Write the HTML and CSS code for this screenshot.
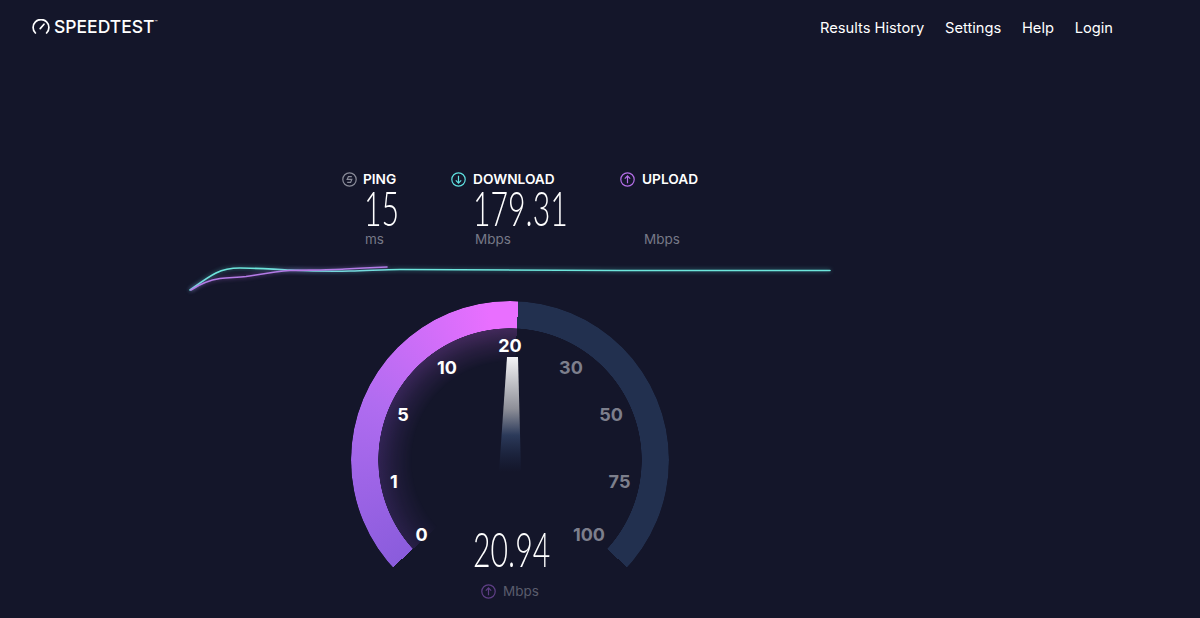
FILE: index.html
```html
<!DOCTYPE html>
<html lang="en">
<head>
<meta charset="utf-8">
<title>Speedtest</title>
<link rel="stylesheet" href="styles.css">
</head>
<body>
<div class="page">
  <header class="topbar">
    <div class="logo">
      <svg class="logo-icon" width="18" height="15" viewBox="0 0 18 15"><path d="M3.400 14A7.900 7.900 0 1 1 14.600 14" fill="none" stroke="#fff" stroke-width="1.700" stroke-linecap="round"/><path d="M8.200 9.600L12 5.200" fill="none" stroke="#fff" stroke-width="1.700" stroke-linecap="round"/></svg>
      <span class="logo-text">SPEEDTEST</span><span class="logo-tm">™</span>
    </div>
    <nav class="nav">
      <a>Results History</a>
      <a>Settings</a>
      <a>Help</a>
      <a>Login</a>
    </nav>
  </header>

  <section class="stats">
    <div class="stat stat-ping">
      <div class="stat-head">
        <svg class="stat-icon" width="15" height="15" viewBox="0 0 15 15"><circle cx="7.500" cy="7.500" r="6.700" fill="none" stroke="#8a8c99" stroke-width="1.200"/><path d="M9.800 4.600H6.400L5.200 7.400H9.800L8.600 10.400H5.200" fill="none" stroke="#8a8c99" stroke-width="1.200"/></svg>
        <span>PING</span>
      </div>
      <div class="stat-value"><span class="thin">15</span></div>
      <div class="stat-unit">ms</div>
    </div>
    <div class="stat stat-down">
      <div class="stat-head">
        <svg class="stat-icon" width="15" height="15" viewBox="0 0 15 15"><circle cx="7.500" cy="7.500" r="6.700" fill="none" stroke="#5fe0e0" stroke-width="1.200"/><path d="M7.500 3.800V11M4.800 8.400l2.700 2.700 2.700-2.700" fill="none" stroke="#5fe0e0" stroke-width="1.200"/></svg>
        <span>DOWNLOAD</span>
      </div>
      <div class="stat-value"><span class="thin">179.31</span></div>
      <div class="stat-unit">Mbps</div>
    </div>
    <div class="stat stat-up">
      <div class="stat-head">
        <svg class="stat-icon" width="15" height="15" viewBox="0 0 15 15"><circle cx="7.500" cy="7.500" r="6.700" fill="none" stroke="#b56fe8" stroke-width="1.200"/><path d="M7.500 11.200V4M4.800 6.600l2.700-2.700 2.700 2.700" fill="none" stroke="#b56fe8" stroke-width="1.200"/></svg>
        <span>UPLOAD</span>
      </div>
      <div class="stat-value"></div>
      <div class="stat-unit">Mbps</div>
    </div>
  </section>

  <svg class="graph" width="650" height="36" viewBox="185 260 650 36">
    <path class="line-teal" d="M190 290C200 283 208 277 216 273C224 269 230 268 240 268C256 268 272 269 290 270C310 271 330 271.500 350 271C370 270.500 385 269.500 400 269.500C500 269.500 560 270 620 270.500C700 270 770 270 830 270.500"/>
    <path class="line-purple" d="M191 290C200 284 210 280 220 278.500C230 277.500 238 277.500 246 276.500C262 274 276 271.500 290 270.500C310 270 330 270 345 269C360 268 372 267.500 387 267"/>
  </svg>

  <div class="gauge">
    <div class="gauge-glow"></div>
    <div class="gauge-ring"></div>
    <svg class="gauge-overlay" width="318" height="318" viewBox="351 301 318 318">
      <defs>
        <linearGradient id="needle" x1="0" y1="0" x2="0" y2="1">
          <stop offset="0" stop-color="#f4f4f6"/>
          <stop offset="0.45" stop-color="#8e8f98"/>
          <stop offset="0.68" stop-color="#2c3a5a"/>
          <stop offset="1" stop-color="#1d2a4a" stop-opacity="0"/>
        </linearGradient>
      </defs>
      <polygon points="507,357 518,357 521,472 499,472" fill="url(#needle)"/>
      <g class="ticks-on">
        <text x="421.500" y="541">0</text>
        <text x="394" y="488">1</text>
        <text x="403" y="421">5</text>
        <text x="447" y="374">10</text>
        <text x="510" y="352">20</text>
      </g>
      <g class="ticks-off">
        <text x="571" y="374">30</text>
        <text x="611" y="421">50</text>
        <text x="619.500" y="488">75</text>
        <text x="589" y="541">100</text>
      </g>
    </svg>
    <div class="gauge-value"><span class="thin">20.94</span></div>
    <div class="gauge-unit">
      <svg width="15" height="15" viewBox="0 0 15 15"><circle cx="7.500" cy="7.500" r="6.700" fill="none" stroke="#5f3f86" stroke-width="1.200"/><path d="M7.500 11.200V4M4.800 6.600l2.700-2.700 2.700 2.700" fill="none" stroke="#5f3f86" stroke-width="1.200"/></svg>
      <span>Mbps</span>
    </div>
  </div>
</div>
</body>
</html>
```
FILE: styles.css
```css
* { box-sizing: border-box; }
html, body { margin: 0; padding: 0; background: #14162a; }
body { font-family: "Inter", "Liberation Sans", sans-serif; color: #fff; }
.page { width: 1200px; height: 618px; overflow: hidden; }

.topbar { display: flex; justify-content: space-between; height: 56px; padding: 18px 87px 0 32px; }
.logo { display: flex; align-items: flex-start; height: 18px; }
.logo-icon { margin-right: 4px; margin-top: 1px; }
.logo-text { font-size: 17.500px; font-weight: 550; line-height: 18px; }
.logo-tm { font-size: 5px; line-height: 8px; }
.nav { display: flex; gap: 20.700px; font-size: 14.700px; line-height: 20px; }

.stats { display: grid; grid-template-columns: 110px 169px 160px; margin: 115px 0 0 341px; }
.stat-head { display: flex; align-items: center; gap: 7px; height: 16px; font-size: 13.700px; font-weight: 600; }
.stat-ping .stat-head { gap: 6px; }
.stat-ping .stat-icon { margin-left: 1px; }
.stat-value { height: 43px; padding-left: 23px; font-size: 48px; line-height: 42px; }
.stat-down .stat-value { padding-left: 22px; }
.stat-unit { padding-left: 24px; font-size: 13.500px; line-height: 18px; color: #777987; }
.thin { display: inline-block; font-family: "Lato", sans-serif; font-weight: 300; transform-origin: 0 50%; transform: scaleX(0.63); white-space: nowrap; }

.graph { display: block; margin: 12px 0 0 185px; fill: none; }
.line-teal, .line-purple { fill: none; stroke-width: 1.600; stroke-linecap: round; }
.line-teal { stroke: #6ee6dc; filter: drop-shadow(0 0 2px rgba(90, 220, 220, 0.6)); }
.line-purple { stroke: #b47be6; filter: drop-shadow(0 0 2px rgba(180, 110, 230, 0.6)); }

.gauge { position: relative; width: 318px; height: 318px; margin: 5px 0 0 351px; }
.gauge-ring, .gauge-glow, .gauge-overlay { position: absolute; left: 0; top: 0; width: 318px; height: 318px; border-radius: 50%; }
.gauge-ring {
  background: conic-gradient(from 227.500deg, #8a5cdc 0deg, #b06cf0 65deg, #e96fff 125deg, #e96fff 135.500deg, #22304f 135.500deg, #22304f 265deg, transparent 265deg);
  -webkit-mask: radial-gradient(circle at center, transparent 131.500px, #000 132px);
  mask: radial-gradient(circle at center, transparent 131.500px, #000 132px);
}
.gauge-glow {
  background: conic-gradient(from 227.500deg, rgba(120, 70, 190, 0.2) 0deg, rgba(125, 70, 190, 0.3) 60deg, rgba(170, 85, 200, 0.32) 120deg, rgba(170, 85, 200, 0.3) 135.500deg, transparent 135.500deg);
  -webkit-mask: radial-gradient(circle at center, transparent 98px, rgba(0,0,0,.45) 116px, #000 132px);
  mask: radial-gradient(circle at center, transparent 98px, rgba(0,0,0,.45) 116px, #000 132px);
}
.gauge-overlay { border-radius: 0; overflow: visible; }
.gauge-overlay text { font-family: "Inter", sans-serif; font-size: 18px; font-weight: 700; text-anchor: middle; }
.ticks-on { fill: #fff; }
.ticks-off { fill: #7d7f8c; }

.gauge-value { position: absolute; left: 122px; top: 223px; font-size: 48px; line-height: 50px; }
.gauge-unit { position: absolute; left: 130px; top: 282px; display: flex; align-items: center; gap: 7px; font-size: 13.500px; color: #5a5c6c; }
```
